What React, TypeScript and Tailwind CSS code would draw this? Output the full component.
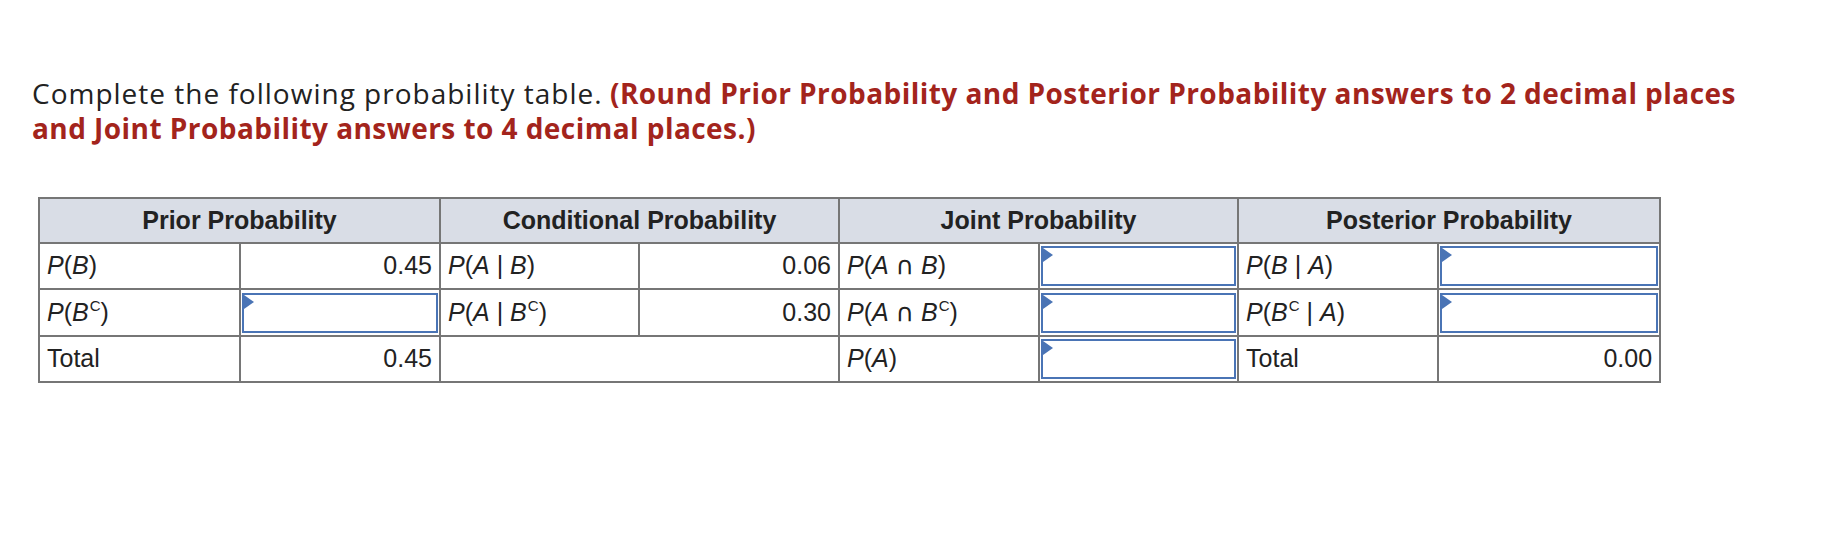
import React from "react";

const I = ({ children }: { children: React.ReactNode }) => <i>{children}</i>;
const Sup = () => <sup className="not-italic text-[15px] relative -top-[10px] ml-[1px]">C</sup>;
const Cap = () => <span style={{ fontFamily: "'DejaVu Sans', sans-serif" }} className="text-[25px]">∩</span>;

function InputCell() {
  return (
    <td className="p-0 border-2 border-[#767676] h-full">
      <div className="relative m-[1px] h-[40px] border-2 border-[#4a74b5] bg-white">
        <svg className="absolute left-0 top-0" width="11" height="14" viewBox="0 0 11 14">
          <polygon points="0,0 10,7 0,14" fill="#4a74b5" />
        </svg>
      </div>
    </td>
  );
}

const Lbl = ({ children }: { children?: React.ReactNode }) => (
  <td className="border-2 border-[#767676] px-[7px] text-left align-middle whitespace-nowrap">{children}</td>
);
const Val = ({ children }: { children?: React.ReactNode }) => (
  <td className="border-2 border-[#767676] px-[7px] text-right align-middle">{children}</td>
);

export default function App() {
  return (
    <div className="w-[1830px] h-[552px] bg-white">
      <div className="pt-[76px] pl-[32px]">
        <p
          className="text-[28px] leading-[35px] text-[#222] whitespace-nowrap"
          style={{ fontFamily: "'Open Sans', Lato, sans-serif" }}
        >
          <span className="tracking-[1px]">Complete the following probability table.</span>{" "}
          <span className="font-bold text-[#a3241c] tracking-[0.45px]">
            (Round Prior Probability and Posterior Probability answers to 2 decimal places
            <br />
            and Joint Probability answers to 4 decimal places.)
          </span>
        </p>
      </div>
      <div className="pl-[38px] pt-[51px]">
        <table
          className="table-fixed border-collapse border-2 border-[#767676] w-[1621px] text-[25px] text-[#222]"
          style={{ fontFamily: "'Liberation Sans', Arial, sans-serif" }}
        >
          <colgroup>
            <col className="w-[201px]" />
            <col className="w-[200px]" />
            <col className="w-[199px]" />
            <col className="w-[200px]" />
            <col className="w-[200px]" />
            <col className="w-[199px]" />
            <col className="w-[200px]" />
            <col className="w-[222px]" />
          </colgroup>
          <thead>
            <tr className="h-[45px] bg-[#d9dde6]">
              <th colSpan={2} className="border-2 border-[#767676] font-bold text-center">Prior Probability</th>
              <th colSpan={2} className="border-2 border-[#767676] font-bold text-center">Conditional Probability</th>
              <th colSpan={2} className="border-2 border-[#767676] font-bold text-center">Joint Probability</th>
              <th colSpan={2} className="border-2 border-[#767676] font-bold text-center">Posterior Probability</th>
            </tr>
          </thead>
          <tbody>
            <tr className="h-[46px]">
              <Lbl><I>P</I>(<I>B</I>)</Lbl>
              <Val>0.45</Val>
              <Lbl><I>P</I>(<I>A</I> | <I>B</I>)</Lbl>
              <Val>0.06</Val>
              <Lbl><I>P</I>(<I>A</I> <Cap /> <I>B</I>)</Lbl>
              <InputCell />
              <Lbl><I>P</I>(<I>B</I> | <I>A</I>)</Lbl>
              <InputCell />
            </tr>
            <tr className="h-[47px]">
              <Lbl><I>P</I>(<I>B</I><Sup />)</Lbl>
              <InputCell />
              <Lbl><I>P</I>(<I>A</I> | <I>B</I><Sup />)</Lbl>
              <Val>0.30</Val>
              <Lbl><I>P</I>(<I>A</I> <Cap /> <I>B</I><Sup />)</Lbl>
              <InputCell />
              <Lbl><I>P</I>(<I>B</I><Sup /> | <I>A</I>)</Lbl>
              <InputCell />
            </tr>
            <tr className="h-[46px]">
              <Lbl>Total</Lbl>
              <Val>0.45</Val>
              <td colSpan={2} className="border-2 border-[#767676]"></td>
              <Lbl><I>P</I>(<I>A</I>)</Lbl>
              <InputCell />
              <Lbl>Total</Lbl>
              <Val>0.00</Val>
            </tr>
          </tbody>
        </table>
      </div>
    </div>
  );
}
